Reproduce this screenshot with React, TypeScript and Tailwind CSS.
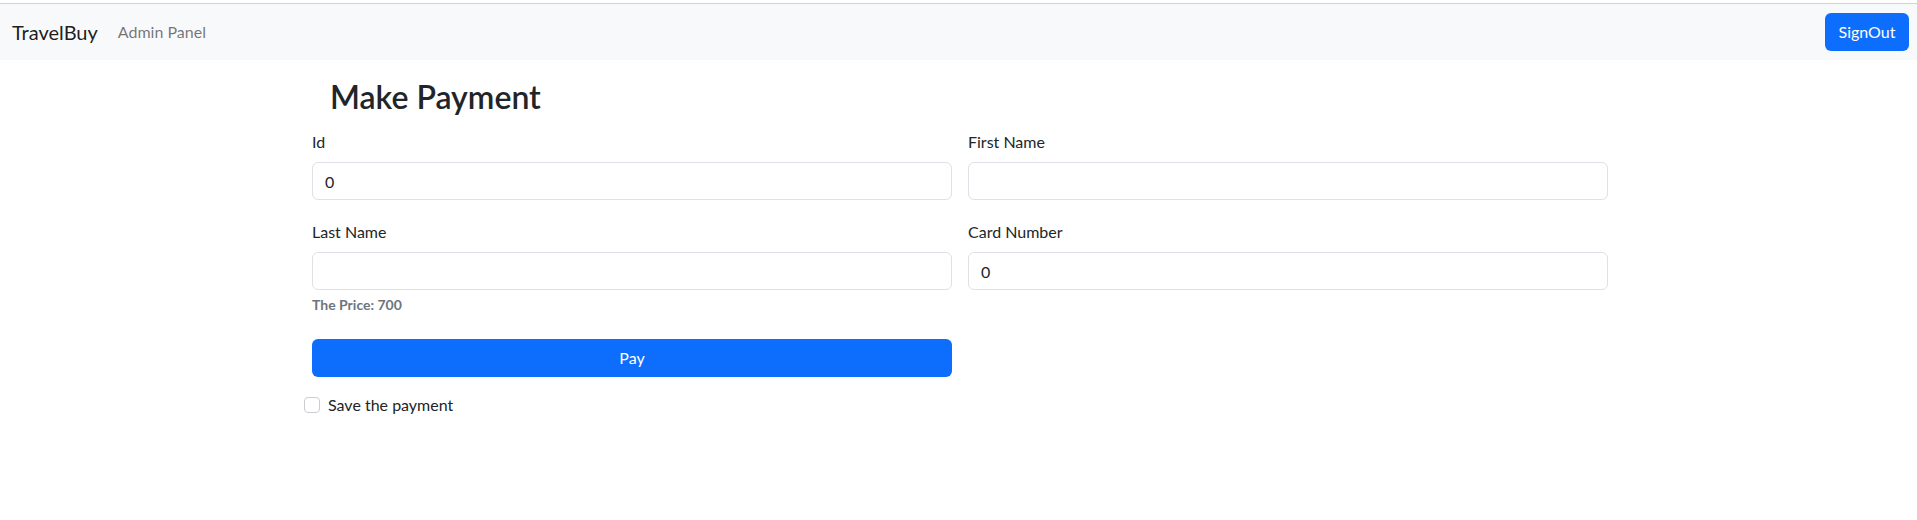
import React from 'react';

const Field = ({ label, value, hint }: { label: string; value?: string; hint?: string }) => (
  <div className="flex flex-col">
    <label className="text-[16px] leading-[24px] text-[#212529] mb-2">{label}</label>
    <input
      type="text"
      defaultValue={value}
      className="h-[38px] w-full rounded-[6px] border border-[#dee2e6] bg-white px-3 text-[16px] text-[#212529] outline-none"
    />
    {hint && (
      <div className="mt-1 text-[14px] leading-[21px] font-bold text-[#6c757d]">{hint}</div>
    )}
  </div>
);

export default function App() {
  return (
    <div className="min-h-[520px] bg-white font-['Lato',sans-serif] text-[#212529]">
      {/* navbar */}
      <nav className="mt-[3px] flex h-[57px] items-center justify-between border-t border-[#d3d3d3] bg-[#f8f9fa] pl-[12px] pr-[8px]">
        <div className="flex items-center">
          <a className="text-[20px] leading-[30px] text-black/90">TravelBuy</a>
          <a className="ml-[20px] text-[16px] leading-[24px] text-black/55">Admin Panel</a>
        </div>
        <button className="h-[38px] w-[84px] rounded-[6px] bg-[#0d6efd] text-[16px] text-white">SignOut</button>
      </nav>

      {/* payment form */}
      <main className="pl-[304px] pt-[18px]">
        <h2 className="ml-[26px] text-[32px] leading-[38px] font-semibold text-[#212529]">Make Payment</h2>
        <div className="mt-[14px] grid w-[1304px] grid-cols-[640px_640px] gap-x-4 gap-y-[20px] pl-2">
          <Field label="Id" value="0" />
          <Field label="First Name" />
          <div className="flex flex-col">
            <Field label="Last Name" hint="The Price: 700" />
            <button className="mt-[24px] h-[38px] w-full rounded-[6px] bg-[#0d6efd] text-[16px] text-white">Pay</button>
          </div>
          <Field label="Card Number" value="0" />
        </div>
        <label className="mt-[16px] flex items-center gap-2 text-[16px] leading-[24px]">
          <input
            type="checkbox"
            className="h-4 w-4 appearance-none rounded-[4px] border border-[#c9cdd1] bg-white"
          />
          <span>Save the payment</span>
        </label>
      </main>
    </div>
  );
}
